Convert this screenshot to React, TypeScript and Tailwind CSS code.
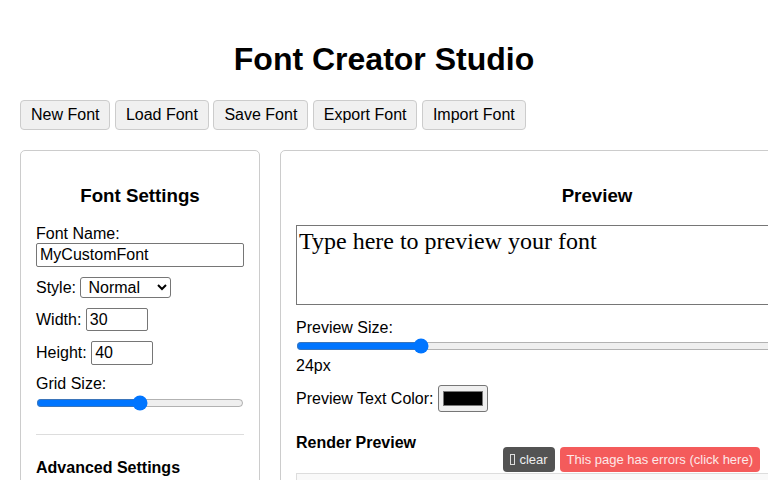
import { useState } from "react";

const toolbar = ["New Font", "Load Font", "Save Font", "Export Font", "Import Font"];

export default function App() {
  const [fontName, setFontName] = useState("MyCustomFont");
  const [style, setStyle] = useState("normal");
  const [width, setWidth] = useState("30");
  const [height, setHeight] = useState("40");
  const [gridSize, setGridSize] = useState(20);
  const [previewText, setPreviewText] = useState("Type here to preview your font");
  const [previewSize, setPreviewSize] = useState(24);
  const [textColor, setTextColor] = useState("#000000");

  return (
    <div className="p-[20px] bg-white text-black text-[16px] leading-[normal] font-['Liberation_Sans',Arial,sans-serif]">
      <h1 className="my-[21.44px] text-center text-[32px] font-bold">Font Creator Studio</h1>

      {/* Toolbar */}
      <div className="flex gap-[4.45px]">
        {toolbar.map((label) => (
          <button
            key={label}
            className="px-[10px] py-[5px] border border-[#ccc] rounded-[4px] bg-[#f0f0f0] text-[16px] leading-[normal]"
          >
            {label}
          </button>
        ))}
      </div>

      <div className="flex items-start gap-[20px] mt-[20px]">
        {/* Settings panel */}
        <div className="w-[240px] shrink-0 border border-[#ccc] rounded-[5px] p-[15px]">
          <h3 className="my-[18.72px] text-center text-[18.72px] font-bold">Font Settings</h3>

          <div className="mb-[10px]">
            <label className="block">Font Name:</label>
            <input
              className="block w-full h-[24px] px-[3px] border border-[#767676] rounded-[2px] bg-white"
              value={fontName}
              onChange={(e) => setFontName(e.target.value)}
            />
          </div>

          <div className="mb-[10px] flex items-center">
            <label>Style:</label>
            <select
              className="ml-[4.45px] w-[91px] h-[21px] pl-[3px] border border-[#767676] rounded-[3px] bg-white"
              value={style}
              onChange={(e) => setStyle(e.target.value)}
            >
              <option value="normal">Normal</option>
              <option value="bold">Bold</option>
              <option value="italic">Italic</option>
            </select>
          </div>

          <div className="mb-[10px] flex items-center">
            <label>Width:</label>
            <input
              type="number"
              className="ml-[4.45px] w-[62px] h-[23px] px-[3px] border border-[#767676] rounded-[2px] bg-white"
              value={width}
              onChange={(e) => setWidth(e.target.value)}
            />
          </div>

          <div className="mb-[10px] flex items-center">
            <label>Height:</label>
            <input
              type="number"
              className="ml-[4.45px] w-[62px] h-[24px] px-[3px] border border-[#767676] rounded-[2px] bg-white"
              value={height}
              onChange={(e) => setHeight(e.target.value)}
            />
          </div>

          <div className="mb-[10px]">
            <label className="block">Grid Size:</label>
            <input
              type="range"
              min={8}
              max={32}
              value={gridSize}
              onChange={(e) => setGridSize(Number(e.target.value))}
              className="block w-full h-[16px] mt-[2px] mb-[3px]"
            />
          </div>

          <hr className="mt-[23px] mb-0 border-t border-[#ddd]" />

          <h4 className="mt-[24px] mb-[21.28px] text-[16px] font-bold">Advanced Settings</h4>
          <div className="h-[120px]" />
        </div>

        {/* Preview panel */}
        <div className="w-[634px] shrink-0 border border-[#ccc] rounded-[5px] p-[15px]">
          <h3 className="my-[18.72px] text-center text-[18.72px] font-bold">Preview</h3>

          <textarea
            className="block w-full h-[80px] mb-[14px] p-[2px] border border-[#767676] resize-none text-[24px] leading-[normal] font-['Liberation_Serif','Times_New_Roman',serif]"
            style={{ color: textColor }}
            value={previewText}
            onChange={(e) => setPreviewText(e.target.value)}
          />

          <div className="mb-[10px]">
            <label className="block">Preview Size:</label>
            <input
              type="range"
              min={12}
              max={72}
              value={previewSize}
              onChange={(e) => setPreviewSize(Number(e.target.value))}
              className="block w-full h-[16px] mt-[1px] mb-[3px]"
            />
            <span className="block">{previewSize}px</span>
          </div>

          <div className="mb-[10px] flex items-center">
            <label>Preview Text Color:</label>
            <input
              type="color"
              value={textColor}
              onChange={(e) => setTextColor(e.target.value)}
              className="ml-[4.45px] w-[50px] h-[27px] px-[2px] py-[1px] border border-[#767676] rounded-[3px] bg-[#efefef]"
            />
          </div>

          <h4 className="my-[21.28px] text-[16px] font-bold">Render Preview</h4>
          <div className="h-[200px] border border-[#ddd] bg-[#f9f9f9]" />
        </div>
      </div>

      {/* Error overlay */}
      <div className="fixed right-[8px] bottom-[8px] flex gap-[5px] text-[13px]">
        <button className="h-[25px] px-[7px] rounded-[4px] bg-[#535353] text-[#eee] flex items-center gap-[4px]">
          <span className="inline-block w-[5px] h-[11px] border border-[#ddd]" />
          clear
        </button>
        <button className="h-[25px] px-[7px] rounded-[4px] bg-[#f45b5b] text-[#fde8e8]">
          This page has errors (click here)
        </button>
      </div>
    </div>
  );
}
